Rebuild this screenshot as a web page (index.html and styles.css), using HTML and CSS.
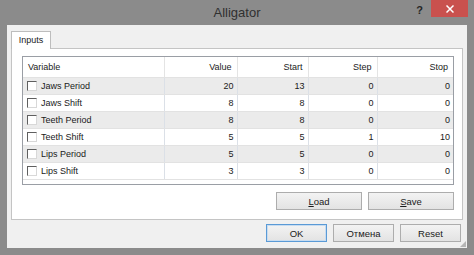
FILE: index.html
```html
<!DOCTYPE html>
<html>
<head>
<meta charset="utf-8">
<title>Alligator</title>
<link rel="stylesheet" href="styles.css">
</head>
<body>
<div class="window">
  <div class="titlebar">
    <div class="title">Alligator</div>
    <div class="controls">
      <span class="help">?</span>
      <span class="close"><svg width="8" height="8" viewBox="0 0 8 8"><path d="M0.5 0.5 L7.5 7.5 M7.5 0.5 L0.5 7.5" stroke="#fff" stroke-width="1.5" fill="none"/></svg></span>
    </div>
  </div>
  <div class="client">
    <div class="tabs"><div class="tab">Inputs</div></div>
    <div class="panel">
      <div class="list">
        <table class="grid">
          <colgroup>
            <col class="c-var"><col class="c-val"><col class="c-start"><col class="c-step"><col class="c-stop">
          </colgroup>
          <thead>
            <tr><th class="left">Variable</th><th>Value</th><th>Start</th><th>Step</th><th>Stop</th></tr>
          </thead>
          <tbody>
            <tr class="odd"><td class="left"><span class="cb"></span>Jaws Period</td><td>20</td><td>13</td><td>0</td><td>0</td></tr>
            <tr><td class="left"><span class="cb"></span>Jaws Shift</td><td>8</td><td>8</td><td>0</td><td>0</td></tr>
            <tr class="odd"><td class="left"><span class="cb"></span>Teeth Period</td><td>8</td><td>8</td><td>0</td><td>0</td></tr>
            <tr><td class="left"><span class="cb"></span>Teeth Shift</td><td>5</td><td>5</td><td>1</td><td>10</td></tr>
            <tr class="odd"><td class="left"><span class="cb"></span>Lips Period</td><td>5</td><td>5</td><td>0</td><td>0</td></tr>
            <tr><td class="left"><span class="cb"></span>Lips Shift</td><td>3</td><td>3</td><td>0</td><td>0</td></tr>
          </tbody>
        </table>
      </div>
      <div class="panel-buttons">
        <button class="btn wide"><u>L</u>oad</button>
        <button class="btn wide"><u>S</u>ave</button>
      </div>
    </div>
    <div class="dialog-buttons">
      <button class="btn default">OK</button>
      <button class="btn">Отмена</button>
      <button class="btn">Reset</button>
    </div>
  </div>
  <div class="grip"></div>
</div>
</body>
</html>
```
FILE: styles.css
```css
* { box-sizing: border-box; }
html, body { margin: 0; padding: 0; }
body {
  background: #8a8a8a;
  font-family: "Liberation Sans", Arial, sans-serif;
  color: #1a1a1a;
}
.window {
  width: 474px;
  height: 255px;
  background: #8b8b8b;
  display: flex;
  flex-direction: column;
  position: relative;
  overflow: hidden;
}
.titlebar {
  height: 25px;
  display: grid;
  grid-template-columns: 1fr auto 1fr;
}
.title {
  grid-column: 2;
  font-size: 13px;
  line-height: 25px;
  color: #303030;
}
.controls {
  grid-column: 3;
  justify-self: end;
  display: flex;
  align-items: flex-start;
  margin-right: 6px;
}
.help {
  font-size: 11px;
  font-weight: bold;
  color: #262626;
  margin-top: 4px;
  margin-right: 8px;
}
.close {
  width: 37px;
  height: 17px;
  background: #c9514e;
  display: flex;
  align-items: center;
  justify-content: center;
}
.client {
  flex: 1;
  margin: 0 7px 7px 7px;
  background: #f0f0f0;
  padding: 6px 4px 0 4px;
  display: flex;
  flex-direction: column;
}
.tabs {
  display: flex;
  height: 18px;
  margin-bottom: -1px;
  position: relative;
  z-index: 1;
}
.tab {
  width: 40px;
  height: 18px;
  border: 1px solid #bdbdbd;
  border-bottom: none;
  background: #fff;
  font-size: 9px;
  line-height: 16px;
  text-align: center;
}
.panel {
  height: 172px;
  border: 1px solid #c4c4c4;
  background: #fff;
  padding: 7px 8px 0 10px;
  display: flex;
  flex-direction: column;
}
.list {
  height: 129px;
  border: 1px solid #9a9ea5;
  background: #fff;
}
.grid {
  width: 430px;
  border-collapse: collapse;
  table-layout: fixed;
  font-size: 9px;
}
.c-var { width: 141px; }
.c-val { width: 73px; }
.c-start { width: 71px; }
.c-step { width: 69px; }
.c-stop { width: 76px; }
.grid th {
  height: 20px;
  font-weight: normal;
  text-align: right;
  padding: 0 5px 0 5px;
  border-right: 1px solid #e4e4e4;
  border-bottom: 1px solid #e2e2e2;
  background: #fff;
}
.grid th:last-child, .grid td:last-child { border-right: none; }
.grid td {
  height: 17px;
  text-align: right;
  padding: 0 3px 0 3px;
  border-right: 1px solid #dbe0e7;
  border-bottom: 1px solid #e2e2e2;
  white-space: nowrap;
}
.grid .left { text-align: left; }
.grid td.left { padding-left: 4px; }
.grid tr.odd td { background: #ebebeb; }
.cb {
  display: inline-block;
  width: 10px;
  height: 10px;
  vertical-align: -2px;
  margin-right: 4px;
  background: #fff;
  border-top: 1px solid #5f5f5f;
  border-left: 1px solid #5f5f5f;
  border-right: 1px solid #d8d8d8;
  border-bottom: 1px solid #d8d8d8;
}
.panel-buttons {
  display: flex;
  justify-content: flex-end;
  gap: 6px;
  margin-top: 7px;
}
.btn {
  font-family: "Liberation Sans", Arial, sans-serif;
  font-size: 9.5px;
  color: #1a1a1a;
  height: 18px;
  width: 61px;
  padding: 0;
  border: 1px solid #adadad;
  background: linear-gradient(#f3f3f3, #e3e3e3);
  border-radius: 0;
}
.btn.wide { width: 86px; }
.btn.default { border-color: #5a9ad6; box-shadow: inset 0 0 0 1px #c8dcf0; }
.dialog-buttons {
  display: flex;
  justify-content: flex-end;
  gap: 6px;
  margin-top: 4px;
  margin-right: 2px;
}
.grip {
  position: absolute;
  right: 8px;
  bottom: 8px;
  width: 6px;
  height: 6px;
  background-image: radial-gradient(circle, #b5b5b5 0.8px, transparent 1px);
  background-size: 2px 2px;
  clip-path: polygon(100% 0, 100% 100%, 0 100%);
}
```
